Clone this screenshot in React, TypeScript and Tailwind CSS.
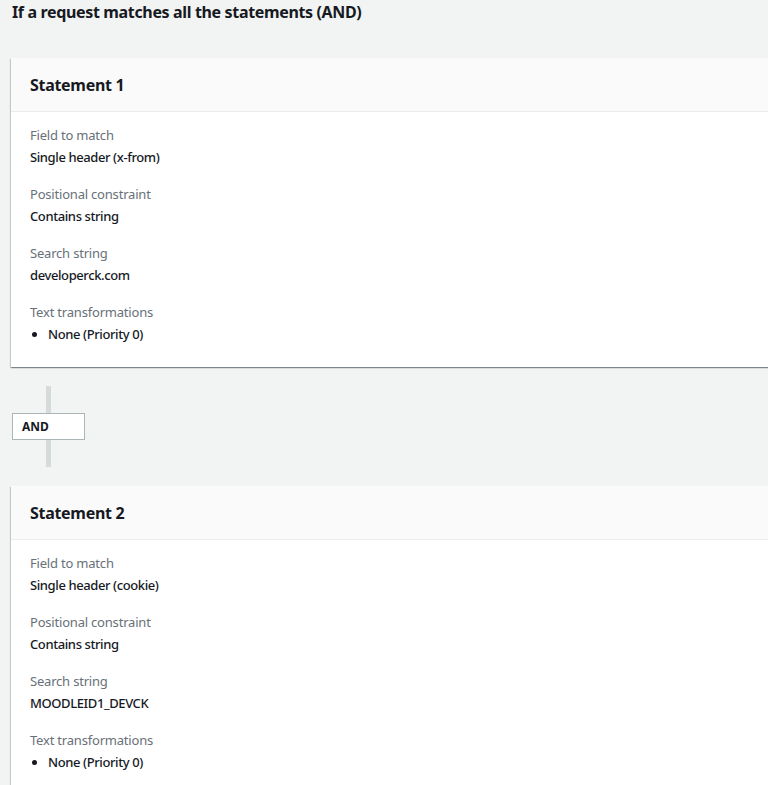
import React from "react"

interface Field {
  label: string
  value: string
  list?: boolean
}

const statements: { title: string; fields: Field[] }[] = [
  {
    title: "Statement 1",
    fields: [
      { label: "Field to match", value: "Single header (x-from)" },
      { label: "Positional constraint", value: "Contains string" },
      { label: "Search string", value: "developerck.com" },
      { label: "Text transformations", value: "None (Priority 0)", list: true },
    ],
  },
  {
    title: "Statement 2",
    fields: [
      { label: "Field to match", value: "Single header (cookie)" },
      { label: "Positional constraint", value: "Contains string" },
      { label: "Search string", value: "MOODLEID1_DEVCK" },
      { label: "Text transformations", value: "None (Priority 0)", list: true },
    ],
  },
]

function StatementCard({ title, fields }: { title: string; fields: Field[] }) {
  return (
    <div className="ml-[11px] -mr-[20px] bg-white shadow-[0_1px_1px_0_rgba(0,28,36,0.3),1px_1px_1px_0_rgba(0,28,36,0.15),-1px_1px_1px_0_rgba(0,28,36,0.15)]">
      <div className="h-[54px] flex items-center px-[19px] bg-[#fafafa] border-b border-[#eaeded]">
        <h2 className="text-[16px] font-bold tracking-[-0.3px] text-[#16191f]">{title}</h2>
      </div>
      <div className="px-[19px] pt-[14px] pb-[24px] flex flex-col gap-[19px]">
        {fields.map((f) => (
          <div key={f.label} className="flex flex-col gap-[4px]">
            <div className="text-[13px] leading-[18px] tracking-[-0.2px] text-[#687078]">{f.label}</div>
            {f.list ? (
              <ul className="list-disc pl-[18px] text-[13px] leading-[18px] font-medium tracking-[-0.4px] text-[#16191f]">
                <li>{f.value}</li>
              </ul>
            ) : (
              <div className="text-[13px] leading-[18px] font-medium tracking-[-0.4px] text-[#16191f]">{f.value}</div>
            )}
          </div>
        ))}
      </div>
    </div>
  )
}

function Connector() {
  return (
    <div className="flex flex-col items-start pl-[12px] py-[19px]">
      <div className="ml-[34px] w-[5px] h-[27px] bg-[#d5dbdb]" />
      <div className="w-[73px] h-[27px] flex items-center px-[9px] bg-white border border-[#aab7b8] text-[12px] font-bold text-[#16191f]">
        AND
      </div>
      <div className="ml-[34px] w-[5px] h-[27px] bg-[#d5dbdb]" />
    </div>
  )
}

export default function App() {
  return (
    <div
      className="w-[768px] h-[785px] overflow-hidden bg-[#f2f3f3]"
      style={{ fontFamily: '"Noto Sans", "Open Sans", sans-serif' }}
    >
      <h1 className="pl-[12px] pt-[1px] h-[58px] text-[16px] leading-[22px] font-bold tracking-[-0.35px] text-[#16191f]">
        If a request matches all the statements (AND)
      </h1>
      <StatementCard {...statements[0]} />
      <Connector />
      <StatementCard {...statements[1]} />
    </div>
  )
}
